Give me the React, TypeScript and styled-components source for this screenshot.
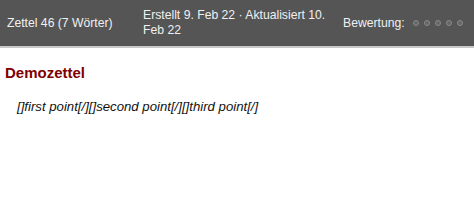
import styled, { createGlobalStyle } from 'styled-components'

const GlobalStyle = createGlobalStyle`
  body {
    margin: 0;
    background: #fff;
    font-family: "Liberation Sans", Arial, sans-serif;
  }
`

const Header = styled.div`
  display: flex;
  align-items: center;
  height: 46px;
  background-color: #555555;
  border-bottom: 2px solid #c8c8c8;
  color: #f0f0f0;
  font-size: 12.2px;
  line-height: 15px;
`

type CellProps = {
  width?: number
}

const Cell = styled.div<CellProps>`
  padding-left: 7px;
  width: ${(props) => (props.width ? `${props.width}px` : 'auto')};
  flex: ${(props) => (props.width ? 'none' : '1')};
  box-sizing: border-box;
`

const Rating = styled.div`
  display: flex;
  align-items: center;
  gap: 5px;
`

const Dots = styled.span`
  display: inline-flex;
  gap: 5px;
  margin-left: 3px;
`

const Dot = styled.span`
  width: 4px;
  height: 4px;
  border-radius: 50%;
  border: 1px solid #8a8a8a;
  background: #666;
`

const Content = styled.div`
  padding: 6px 5px;
`

const Title = styled.h1`
  margin: 10px 0 0;
  color: #7f0000;
  font-size: 15px;
  font-weight: bold;
`

const Body = styled.p`
  margin: 18px 0 0 12px;
  font-size: 13.2px;
  font-style: italic;
  color: #111;
`

export default function App() {
  return (
    <>
      <GlobalStyle />
      <Header>
        <Cell width={136}>Zettel 46 (7 Wörter)</Cell>
        <Cell width={200}>Erstellt 9. Feb 22 · Aktualisiert 10. Feb 22</Cell>
        <Cell>
          <Rating>
            Bewertung:
            <Dots>
              <Dot />
              <Dot />
              <Dot />
              <Dot />
              <Dot />
            </Dots>
          </Rating>
        </Cell>
      </Header>
      <Content>
        <Title>Demozettel</Title>
        <Body>[]first point[/][]second point[/][]third point[/]</Body>
      </Content>
    </>
  )
}
